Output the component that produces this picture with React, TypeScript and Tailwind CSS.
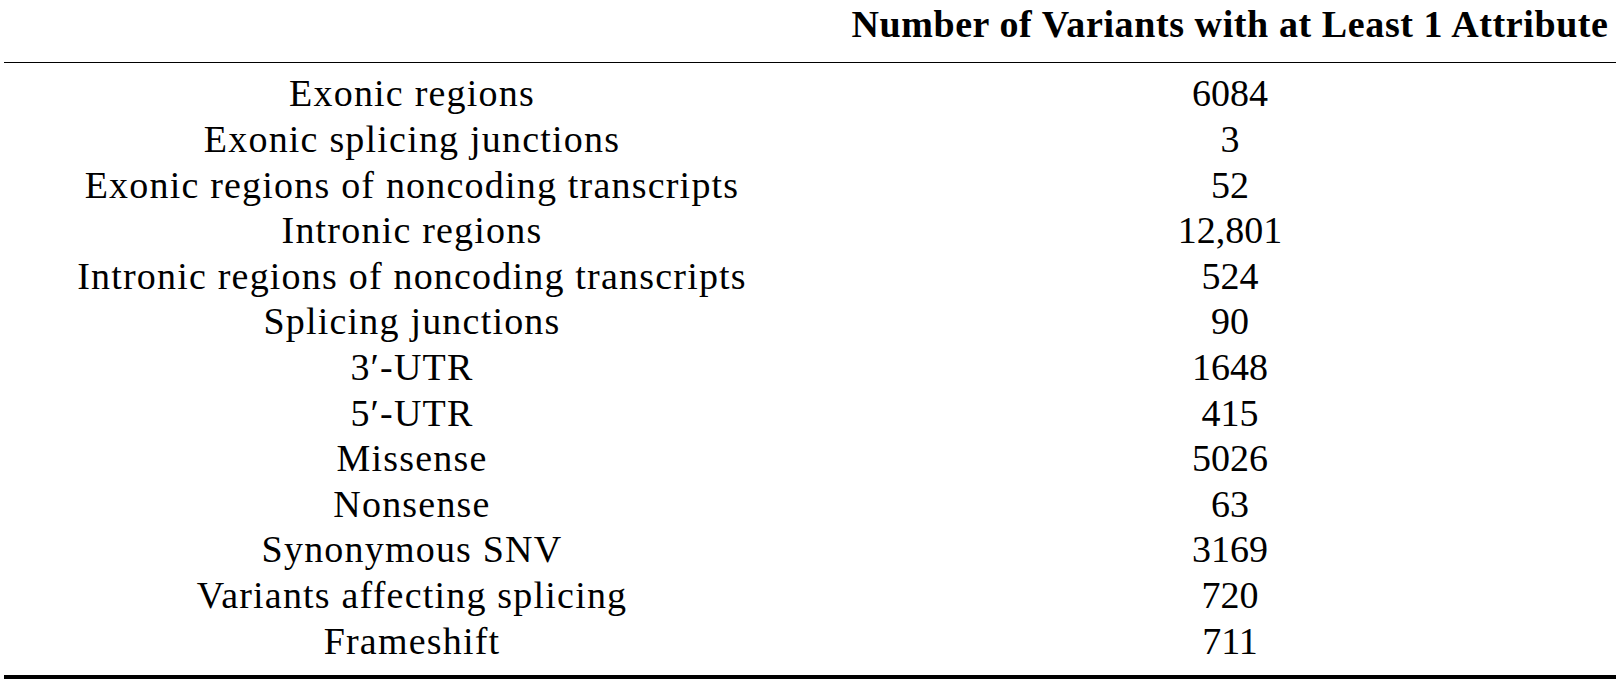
const rows = [
  ["Exonic regions", "6084"],
  ["Exonic splicing junctions", "3"],
  ["Exonic regions of noncoding transcripts", "52"],
  ["Intronic regions", "12,801"],
  ["Intronic regions of noncoding transcripts", "524"],
  ["Splicing junctions", "90"],
  ["3\u2032-UTR", "1648"],
  ["5\u2032-UTR", "415"],
  ["Missense", "5026"],
  ["Nonsense", "63"],
  ["Synonymous SNV", "3169"],
  ["Variants affecting splicing", "720"],
  ["Frameshift", "711"],
]

export default function App() {
  return (
    <div className="w-[1616px] h-[682px] overflow-hidden bg-white text-black font-['Liberation_Serif',serif] text-[38px]">
      <div className="ml-[4px]">
        {/* header */}
        <div className="flex h-[62px] pt-[2px] leading-[45.6px]">
          <div className="w-[816px]" />
          <div className="flex-1 pl-[24px] text-center font-bold tracking-[0.6px] whitespace-nowrap">
            Number of Variants with at Least 1 Attribute
          </div>
        </div>
        <div className="h-[1.4px] bg-black" />

        {/* body */}
        <div className="pt-[8px] pb-[11px]">
          {rows.map(([label, count]) => (
            <div key={label} className="flex h-[45.6px] leading-[45.6px]">
              <div className="w-[816px] text-center whitespace-nowrap tracking-[1.2px]">{label}</div>
              <div className="flex-1 pl-[24px] text-center">{count}</div>
            </div>
          ))}
        </div>
        <div className="h-[4px] bg-black" />
      </div>
    </div>
  )
}
